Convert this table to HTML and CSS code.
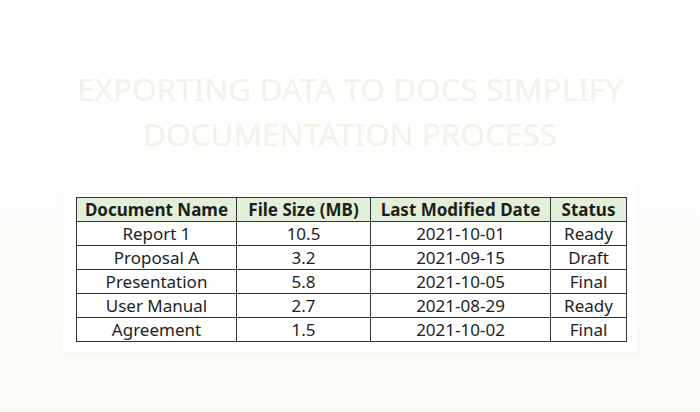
FILE: index.html
```html
<!DOCTYPE html>
<html>
<head>
<meta charset="utf-8">
<link rel="stylesheet" href="styles.css">
</head>
<body>
<div class="page">
  <h1 class="title">Exporting Data To Docs Simplify Documentation Process</h1>
  <div class="card">
    <table class="sheet">
      <thead>
        <tr><th class="c1">Document Name</th><th class="c2">File Size (MB)</th><th class="c3">Last Modified Date</th><th class="c4">Status</th></tr>
      </thead>
      <tbody>
        <tr><td>Report 1</td><td>10.5</td><td>2021-10-01</td><td>Ready</td></tr>
        <tr><td>Proposal A</td><td>3.2</td><td>2021-09-15</td><td>Draft</td></tr>
        <tr><td>Presentation</td><td>5.8</td><td>2021-10-05</td><td>Final</td></tr>
        <tr><td>User Manual</td><td>2.7</td><td>2021-08-29</td><td>Ready</td></tr>
        <tr><td>Agreement</td><td>1.5</td><td>2021-10-02</td><td>Final</td></tr>
      </tbody>
    </table>
  </div>
</div>
</body>
</html>
```
FILE: styles.css
```css
html, body {
  margin: 0;
  padding: 0;
}
body {
  width: 700px;
  height: 412px;
  overflow: hidden;
  background: linear-gradient(180deg, #ffffff 0%, #fdfefc 40%, #f9fbf4 100%);
  font-family: "Noto Sans", "Open Sans", sans-serif;
}
.page {
  display: flex;
  flex-direction: column;
  align-items: center;
  padding-top: 66px;
}
.title {
  margin: 0;
  width: 580px;
  text-align: center;
  text-transform: uppercase;
  font-weight: 400;
  font-size: 31.5px;
  line-height: 45px;
  color: #eff4e9;
  letter-spacing: 0;
}
.card {
  margin-top: 29px;
  width: 574px;
  box-sizing: border-box;
  padding: 12px 11px 10px 13px;
  background: #ffffff;
  box-shadow: 0 2px 4px rgba(200, 210, 190, 0.15);
}
.sheet {
  border-collapse: collapse;
  width: 550px;
  table-layout: fixed;
  font-size: 17px;
  color: #1e1e1e;
}
.sheet th, .sheet td {
  border: 1.5px solid #333;
  height: 23px;
  padding: 0;
  text-align: center;
  line-height: 22px;
  white-space: nowrap;
}
.sheet th {
  background: #e2efd9;
  font-weight: 700;
}
.c1 { width: 159px; }
.c2 { width: 133px; }
.c3 { width: 179px; }
.c4 { width: 75px; }
```
